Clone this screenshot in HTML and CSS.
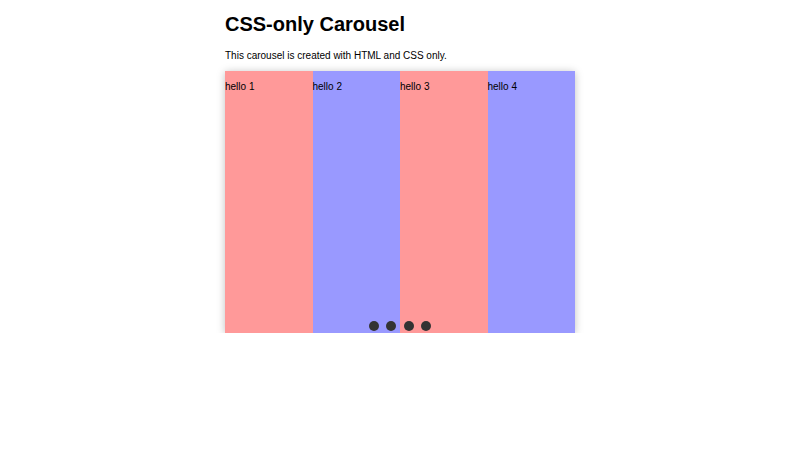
FILE: index.html
```html
<!DOCTYPE html>
<html lang="en">
<head>
    <meta charset="UTF-8">
    <meta name="viewport" content="width=device-width, initial-scale=1.0">
    <title>CSS-only Carousel</title>
    <link rel="stylesheet" href="styles.css">
</head>
<body>
    <div class="page">
        <h1>CSS-only Carousel</h1>
        <p>This carousel is created with HTML and CSS only.</p>

        <section class="carousel">
            <ol class="carousel-viewport">
                <li class="carousel-slide odd">hello 1</li>
                <li class="carousel-slide even">hello 2</li>
                <li class="carousel-slide odd">hello 3</li>
                <li class="carousel-slide even">hello 4</li>
            </ol>
            <nav class="carousel-nav">
                <a class="carousel-dot" href="#"></a>
                <a class="carousel-dot" href="#"></a>
                <a class="carousel-dot" href="#"></a>
                <a class="carousel-dot" href="#"></a>
            </nav>
        </section>
    </div>
</body>
</html>
```

FILE: styles.css
```css
body {
    margin: 0;
    font-family: "Liberation Sans", Arial, sans-serif;
    font-size: 10px;
    color: #000;
    background-color: #fff;
}
.page {
    width: 350px;
    margin: 0 auto;
}
h1 {
    font-size: 20px;
    margin: 13.4px 0;
}
p {
    margin: 10px 0;
}
.carousel {
    position: relative;
    height: 262px;
    box-shadow: 0 1px 8px rgba(0,0,0,0.25);
}
.carousel-viewport {
    display: flex;
    height: 100%;
    margin: 0;
    padding: 0;
    list-style: none;
}
.carousel-slide {
    flex: 1;
    padding-top: 10px;
}
.odd { background-color: #ff9999; }
.even { background-color: #9999ff; }
.carousel-nav {
    position: absolute;
    left: 0;
    right: 0;
    bottom: 2px;
    display: flex;
    justify-content: center;
    gap: 7.6px;
}
.carousel-dot {
    width: 10px;
    height: 10px;
    border-radius: 50%;
    background-color: #333;
}
```
